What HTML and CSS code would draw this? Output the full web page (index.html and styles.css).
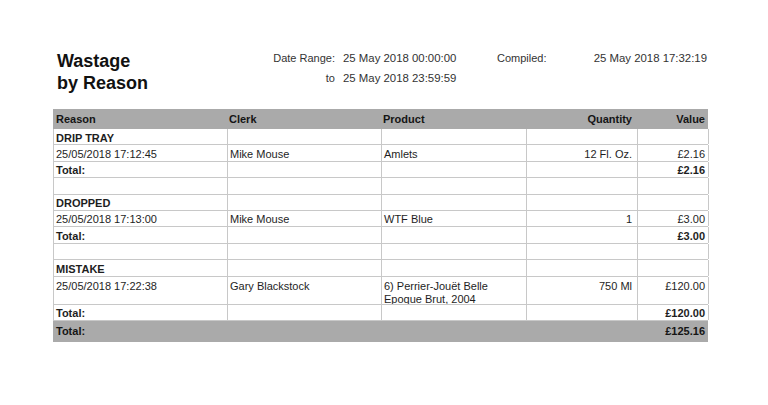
FILE: index.html
```html
<!DOCTYPE html>
<html>
<head>
<meta charset="utf-8">
<link rel="stylesheet" href="styles.css">
</head>
<body>
<div class="page">
  <header class="report-head">
    <h1 class="title">Wastage<br>by Reason</h1>
    <div class="meta">
      <span class="lbl">Date Range:</span><span class="val">25 May 2018 00:00:00</span><span class="lbl2">Compiled:</span><span class="val2">25 May 2018 17:32:19</span>
      <span class="lbl">to</span><span class="val">25 May 2018 23:59:59</span><span></span><span></span>
    </div>
  </header>

  <div class="grid">
    <div class="row head"><div class="c">Reason</div><div class="c">Clerk</div><div class="c">Product</div><div class="c r q">Quantity</div><div class="c r">Value</div></div>

    <div class="row"><div class="c b">DRIP TRAY</div><div class="c"></div><div class="c"></div><div class="c"></div><div class="c"></div></div>
    <div class="row"><div class="c">25/05/2018 17:12:45</div><div class="c">Mike Mouse</div><div class="c">Amlets</div><div class="c r q">12 Fl. Oz.</div><div class="c r">£2.16</div></div>
    <div class="row"><div class="c b">Total:</div><div class="c"></div><div class="c"></div><div class="c"></div><div class="c r b">£2.16</div></div>
    <div class="row"><div class="c"></div><div class="c"></div><div class="c"></div><div class="c"></div><div class="c"></div></div>

    <div class="row"><div class="c b">DROPPED</div><div class="c"></div><div class="c"></div><div class="c"></div><div class="c"></div></div>
    <div class="row"><div class="c">25/05/2018 17:13:00</div><div class="c">Mike Mouse</div><div class="c">WTF Blue</div><div class="c r q">1</div><div class="c r">£3.00</div></div>
    <div class="row"><div class="c b">Total:</div><div class="c"></div><div class="c"></div><div class="c"></div><div class="c r b">£3.00</div></div>
    <div class="row"><div class="c"></div><div class="c"></div><div class="c"></div><div class="c"></div><div class="c"></div></div>

    <div class="row"><div class="c b">MISTAKE</div><div class="c"></div><div class="c"></div><div class="c"></div><div class="c"></div></div>
    <div class="row tall"><div class="c">25/05/2018 17:22:38</div><div class="c">Gary Blackstock</div><div class="c wrap">6) Perrier-Jouët Belle Epoque Brut, 2004</div><div class="c r q">750 Ml</div><div class="c r">£120.00</div></div>
    <div class="row"><div class="c b">Total:</div><div class="c"></div><div class="c"></div><div class="c"></div><div class="c r b">£120.00</div></div>

    <div class="row grand"><div class="c b">Total:</div><div class="c"></div><div class="c"></div><div class="c"></div><div class="c r b">£125.16</div></div>
  </div>
</div>
</body>
</html>
```

FILE: styles.css
```css
* { box-sizing: border-box; }
html, body { margin: 0; padding: 0; background: #fff; }
body { font-family: "Liberation Sans", Arial, sans-serif; color: #222; }

.page { width: 768px; padding: 48px 0 0 53px; }

.report-head {
  width: 655px;
  display: flex;
  align-items: flex-start;
}
.title {
  margin: 2px 0 0 0;
  padding-left: 4px;
  width: 164px;
  font-size: 18px;
  line-height: 22px;
  font-weight: bold;
  color: #111;
}
.meta {
  flex: 1;
  display: grid;
  grid-template-columns: 118px 162px 1fr auto;
  font-size: 11px;
  line-height: 20px;
  color: #333;
  padding-right: 1px;
}
.lbl { text-align: right; }
.val { padding-left: 8px; font-size: 11.4px; }
.val2 { text-align: right; font-size: 11.4px; }

.grid {
  margin-top: 15px;
  width: 655px;
  font-size: 11px;
  color: #1e1e1e;
}
.row {
  display: grid;
  grid-template-columns: 174px 154px 145px 111px 71px;
  height: 16.4px;
  border-bottom: 1px solid #c8c8c8;
  border-left: 1px solid #c8c8c8;
}
.row .c {
  border-right: 1px solid #c8c8c8;
  padding: 1.5px 3px 0 2px;
  line-height: 15.4px;
  white-space: nowrap;
  overflow: hidden;
}
.row .c.r { text-align: right; padding-right: 3px; }
.row .c.q { padding-right: 5px; }
.b { font-weight: bold; }

.row.head, .row.grand {
  height: 20px;
  background: #aaaaaa;
  border: none;
  font-weight: bold;
  color: #151515;
}
.row.grand { height: 20.6px; }
.row.head .c, .row.grand .c {
  border-right: none;
  line-height: 20px;
  padding-top: 0;
}
.row.head .c:first-child, .row.grand .c:first-child { padding-left: 3px; }

.row.tall { height: 28px; }
.row.tall .c {
  line-height: 13px;
  padding-top: 3px;
}
.row.tall .c.wrap { white-space: normal; }
```
